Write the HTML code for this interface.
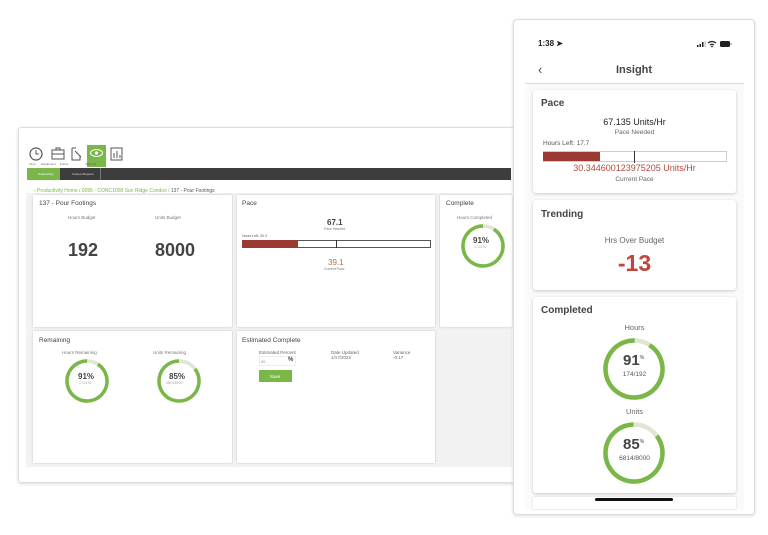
<!DOCTYPE html>
<html><head><meta charset="utf-8"><style>
*{box-sizing:border-box;margin:0;padding:0}
body{width:768px;height:535px;background:#fff;position:relative;overflow:hidden;font-family:"Liberation Sans",sans-serif;color:#444}
.abs{position:absolute}
.desk{left:18px;top:127px;width:520px;height:356px;background:#fff;border:1px solid #ddd;border-radius:3px;box-shadow:0 1px 3px rgba(0,0,0,.15)}
.card{position:absolute;background:#fff;box-shadow:0 0 2px rgba(0,0,0,.2)}
.t{position:absolute;white-space:nowrap}
.phone{left:513px;top:19px;width:242px;height:496px;background:#fff;border:1px solid #ddd;border-radius:4px;box-shadow:0 1px 3px rgba(0,0,0,.15)}
.pc{position:absolute;background:#fff;border-radius:3px;box-shadow:0 1px 3px rgba(0,0,0,.2)}
</style></head><body>
<div class="abs desk"></div>
<!-- toolbar -->
<svg class="abs" style="left:28px;top:145px" width="100" height="22">
<circle cx="8" cy="9" r="6" fill="none" stroke="#555" stroke-width="1.2"/><path d="M8 5v4h3" stroke="#555" fill="none"/>
<rect x="24" y="5" width="12" height="9" fill="none" stroke="#555"/><path d="M28 5v-2h4v2M24 9h12" stroke="#555" fill="none"/>
<path d="M44 3h4M44 3v12h8v-4M47 6l6 6" stroke="#555" fill="none"/>
<rect x="59" y="0" width="19" height="22" fill="#7ab648"/>
<ellipse cx="68.5" cy="8" rx="6" ry="3.5" fill="none" stroke="#fff"/><circle cx="68.5" cy="8" r="1.6" fill="#fff"/>
<rect x="83" y="3" width="11" height="12" fill="none" stroke="#555"/><path d="M86 13v-5M89 13v-7M92 13v-3" stroke="#555"/>
</svg>
<div class="t" style="left:29px;top:162px;font-size:3px;color:#666">Time &nbsp; &nbsp; &nbsp; Equipment &nbsp; &nbsp; Forms &nbsp; &nbsp; <span style="color:#fff">Insight</span> &nbsp; &nbsp; Reports</div>
<div class="abs" style="left:27px;top:168px;width:484px;height:12px;background:#3d3d3d"></div>
<div class="abs" style="left:27px;top:168px;width:33px;height:12px;background:#7ab648"></div>
<div class="t" style="left:38px;top:172px;font-size:3px;color:#fff">Productivity</div>
<div class="t" style="left:72px;top:172px;font-size:3px;color:#ddd">Custom Reports</div>
<div class="abs" style="left:100px;top:168px;width:1px;height:12px;background:#777"></div>
<div class="t" style="left:34px;top:188px;font-size:5px;color:#7ab648">‹ Productivity Home / 0095 - CONC1008 Sun Ridge Condos / <span style="color:#555">137 - Pour Footings</span></div>
<div class="abs" style="left:26px;top:193px;width:486px;height:274px;background:#f2f2f2"></div>
<div class="card" style="left:33px;top:195px;width:199px;height:132px"></div>
<div class="t" style="left:39px;top:200px;font-size:6.5px">137 - Pour Footings</div>
<div class="t" style="left:68px;top:215px;font-size:4.5px;color:#777">Hours Budget</div>
<div class="t" style="left:155px;top:215px;font-size:4.5px;color:#777">Units Budget</div>
<div class="t" style="left:68px;top:240px;font-size:18px;font-weight:bold;color:#444">192</div>
<div class="t" style="left:155px;top:240px;font-size:18px;font-weight:bold;color:#444">8000</div>
<div class="card" style="left:237px;top:195px;width:198px;height:132px"></div>
<div class="t" style="left:242px;top:200px;font-size:6.5px">Pace</div>
<div class="t" style="left:327px;top:218px;font-size:8px;font-weight:bold">67.1</div>
<div class="t" style="left:324px;top:227px;font-size:3.5px;color:#777">Pace Needed</div>
<div class="t" style="left:242px;top:234px;font-size:3.5px;color:#555">Hours Left: 30.3</div>
<div class="abs" style="left:242px;top:240px;width:189px;height:8px;border:1px solid #555;background:#fff"></div>
<div class="abs" style="left:242px;top:240px;width:56px;height:8px;background:#9b3a33"></div>
<div class="abs" style="left:336px;top:240px;width:1px;height:8px;background:#333"></div>
<div class="t" style="left:328px;top:258px;font-size:8px;color:#b5705f">39.1</div>
<div class="t" style="left:324px;top:267px;font-size:3.5px;color:#777">Current Pace</div>
<div class="card" style="left:440px;top:195px;width:72px;height:132px"></div>
<div class="t" style="left:446px;top:200px;font-size:6.5px">Complete</div>
<div class="t" style="left:457px;top:215px;font-size:4.5px;color:#777">Hours Completed</div>
<svg class="abs" style="left:460px;top:223px" width="46" height="46"><circle cx="23" cy="23" r="20" fill="none" stroke="#dfe6d2" stroke-width="3.5"/><circle cx="23" cy="23" r="20" fill="none" stroke="#7ab648" stroke-width="3.5" stroke-dasharray="114 126" transform="rotate(-57 23 23)"/></svg>
<div class="t" style="left:473px;top:236px;font-size:8px;font-weight:bold">91%</div>
<div class="t" style="left:474px;top:245px;font-size:3.5px;color:#aaa">174/192</div>
<div class="card" style="left:33px;top:331px;width:199px;height:132px"></div>
<div class="t" style="left:39px;top:337px;font-size:6.5px">Remaining</div>
<div class="t" style="left:62px;top:350px;font-size:4.5px;color:#777">Hours Remaining</div>
<div class="t" style="left:153px;top:350px;font-size:4.5px;color:#777">Units Remaining</div>
<svg class="abs" style="left:64px;top:358px" width="46" height="46"><circle cx="23" cy="23" r="20" fill="none" stroke="#dfe6d2" stroke-width="3.5"/><circle cx="23" cy="23" r="20" fill="none" stroke="#7ab648" stroke-width="3.5" stroke-dasharray="114 126" transform="rotate(-57 23 23)"/></svg>
<div class="t" style="left:78px;top:372px;font-size:8px;font-weight:bold">91%</div>
<div class="t" style="left:79px;top:381px;font-size:3.5px;color:#aaa">174/192</div>
<svg class="abs" style="left:156px;top:358px" width="46" height="46"><circle cx="23" cy="23" r="20" fill="none" stroke="#dfe6d2" stroke-width="3.5"/><circle cx="23" cy="23" r="20" fill="none" stroke="#7ab648" stroke-width="3.5" stroke-dasharray="107 126" transform="rotate(-37 23 23)"/></svg>
<div class="t" style="left:169px;top:372px;font-size:8px;font-weight:bold">85%</div>
<div class="t" style="left:166px;top:381px;font-size:3.5px;color:#aaa">6814/8000</div>
<div class="card" style="left:237px;top:331px;width:198px;height:132px"></div>
<div class="t" style="left:242px;top:337px;font-size:6.5px">Estimated Complete</div>
<div class="t" style="left:259px;top:350px;font-size:4.5px;color:#666">Estimated Percent</div>
<div class="t" style="left:331px;top:350px;font-size:4.5px;color:#666">Date Updated<br>1/17/2022</div>
<div class="t" style="left:393px;top:350px;font-size:4.5px;color:#666">Variance<br>-0.17</div>
<div class="abs" style="left:259px;top:356px;width:37px;height:10px;border:1px solid #eee"></div>
<div class="t" style="left:261px;top:359px;font-size:4px;color:#999">85</div>
<div class="t" style="left:288px;top:357px;font-size:6px;font-weight:bold">%</div>
<div class="abs" style="left:259px;top:370px;width:33px;height:12px;background:#7ab648"></div>
<div class="t" style="left:270px;top:374px;font-size:4.5px;color:#fff">Save</div>

<!-- phone -->
<div class="abs phone"></div>
<div class="t" style="left:538px;top:39px;font-size:8px;font-weight:bold;color:#222">1:38 ➤</div>
<svg class="abs" style="left:697px;top:40px" width="38" height="8"><rect x="0" y="5" width="1.5" height="2" fill="#222"/><rect x="2.5" y="4" width="1.5" height="3" fill="#222"/><rect x="5" y="2" width="1.5" height="5" fill="#222"/><rect x="7.5" y="1" width="1.5" height="6" fill="#ccc"/><path d="M11 3q4-3 8 0M13 5q2-1.5 4 0" stroke="#222" fill="none" stroke-width="1.2"/><circle cx="15" cy="6.5" r="0.9" fill="#222"/><rect x="23" y="1" width="10" height="6" rx="1.5" fill="#222"/><rect x="33.5" y="3" width="1" height="2" fill="#888"/></svg>
<div class="t" style="left:538px;top:62px;font-size:13px;color:#444">‹</div>
<div class="t" style="left:616px;top:64px;font-size:11px;font-weight:bold;color:#444">Insight</div>
<div class="abs" style="left:525px;top:83px;width:219px;height:1px;background:#ddd"></div>
<div class="abs" style="left:525px;top:84px;width:219px;height:426px;background:#fafafa"></div>
<div class="pc" style="left:533px;top:90px;width:203px;height:103px"></div>
<div class="t" style="left:541px;top:98px;font-size:10px;font-weight:bold">Pace</div>
<div class="t" style="left:534px;top:117px;width:201px;text-align:center;font-size:9px;color:#222">67.135 Units/Hr</div>
<div class="t" style="left:534px;top:129px;width:201px;text-align:center;font-size:6.5px;color:#666">Pace Needed</div>
<div class="t" style="left:543px;top:140px;font-size:6.5px;color:#555">Hours Left: 17.7</div>
<div class="abs" style="left:543px;top:151px;width:184px;height:11px;border:1px solid #ccc;background:#fff"></div>
<div class="abs" style="left:543px;top:152px;width:57px;height:9px;background:#9b3a33"></div>
<div class="abs" style="left:634px;top:151px;width:1px;height:12px;background:#333"></div>
<div class="t" style="left:534px;top:163px;width:201px;text-align:center;font-size:9px;color:#b24a3e">30.344600123975205 Units/Hr</div>
<div class="t" style="left:534px;top:176px;width:201px;text-align:center;font-size:6.5px;color:#666">Current Pace</div>
<div class="pc" style="left:533px;top:200px;width:203px;height:90px"></div>
<div class="t" style="left:541px;top:209px;font-size:10px;font-weight:bold">Trending</div>
<div class="t" style="left:534px;top:236px;width:201px;text-align:center;font-size:8px;color:#666">Hrs Over Budget</div>
<div class="t" style="left:534px;top:250px;width:201px;text-align:center;font-size:23px;font-weight:bold;color:#c0453b">-13</div>
<div class="pc" style="left:533px;top:297px;width:203px;height:196px"></div>
<div class="t" style="left:541px;top:305px;font-size:10px;font-weight:bold">Completed</div>
<div class="t" style="left:534px;top:323px;width:201px;text-align:center;font-size:7.5px;color:#666">Hours</div>
<svg class="abs" style="left:603px;top:338px" width="62" height="62"><circle cx="31" cy="31" r="28.5" fill="none" stroke="#dfe6d2" stroke-width="4.5"/><circle cx="31" cy="31" r="28.5" fill="none" stroke="#7ab648" stroke-width="4.5" stroke-dasharray="163 179" transform="rotate(-57 31 31)"/></svg>
<div class="t" style="left:623px;top:352px;font-size:15px;font-weight:bold">91<sup style="font-size:5px;font-weight:normal">%</sup></div>
<div class="t" style="left:534px;top:371px;width:201px;text-align:center;font-size:6.5px;color:#555">174/192</div>
<div class="t" style="left:534px;top:407px;width:201px;text-align:center;font-size:7.5px;color:#666">Units</div>
<svg class="abs" style="left:603px;top:422px" width="62" height="62"><circle cx="31" cy="31" r="28.5" fill="none" stroke="#dfe6d2" stroke-width="4.5"/><circle cx="31" cy="31" r="28.5" fill="none" stroke="#7ab648" stroke-width="4.5" stroke-dasharray="152 179" transform="rotate(-37 31 31)"/></svg>
<div class="t" style="left:623px;top:436px;font-size:15px;font-weight:bold">85<sup style="font-size:5px;font-weight:normal">%</sup></div>
<div class="t" style="left:534px;top:455px;width:201px;text-align:center;font-size:6.5px;color:#555">6814/8000</div>
<div class="abs" style="left:533px;top:497px;width:203px;height:12px;background:#fff;box-shadow:0 0 2px rgba(0,0,0,.15)"></div>
<div class="abs" style="left:595px;top:498px;width:78px;height:3px;border-radius:2px;background:#111"></div>
</body></html>
